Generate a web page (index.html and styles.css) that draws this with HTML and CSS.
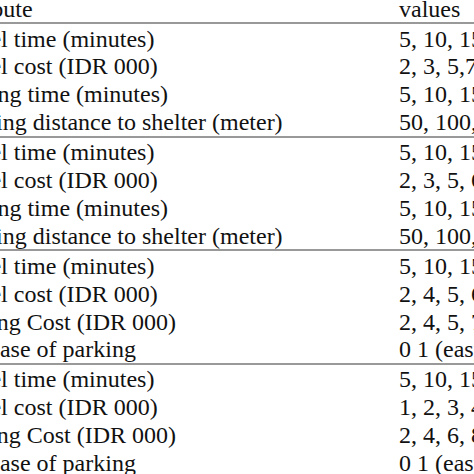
FILE: index.html
```html
<!DOCTYPE html>
<html>
<head>
<meta charset="utf-8">
<link rel="stylesheet" href="styles.css">
</head>
<body>
<div class="frame">
  <table class="tbl">
    <colgroup><col class="c-attr"><col class="c-val"></colgroup>
    <thead>
      <tr class="head"><th>Attribute</th><th>values</th></tr>
    </thead>
    <tbody class="grp">
      <tr><td>Travel time (minutes)</td><td>5, 10, 15, 20</td></tr>
      <tr><td>Travel cost (IDR 000)</td><td>2, 3, 5,7, 10</td></tr>
      <tr><td>Waiting time (minutes)</td><td>5, 10, 15, 20</td></tr>
      <tr><td>Walking distance to shelter (meter)</td><td>50, 100, 200</td></tr>
    </tbody>
    <tbody class="grp">
      <tr><td>Travel time (minutes)</td><td>5, 10, 15, 20</td></tr>
      <tr><td>Travel cost (IDR 000)</td><td>2, 3, 5, 6, 8</td></tr>
      <tr><td>Waiting time (minutes)</td><td>5, 10, 15, 20</td></tr>
      <tr><td>Walking distance to shelter (meter)</td><td>50, 100, 200</td></tr>
    </tbody>
    <tbody class="grp">
      <tr><td>Travel time (minutes)</td><td>5, 10, 15, 20</td></tr>
      <tr><td>Travel cost (IDR 000)</td><td>2, 4, 5, 6, 8</td></tr>
      <tr><td>Parking Cost (IDR 000)</td><td>2, 4, 5, 7, 9</td></tr>
      <tr><td>The ease of parking</td><td>0 1 (easy)</td></tr>
    </tbody>
    <tbody class="grp">
      <tr><td>Travel time (minutes)</td><td>5, 10, 15, 20</td></tr>
      <tr><td>Travel cost (IDR 000)</td><td>1, 2, 3, 4, 5</td></tr>
      <tr><td>Parking Cost (IDR 000)</td><td>2, 4, 6, 8, 10</td></tr>
      <tr><td>The ease of parking</td><td>0 1 (easy)</td></tr>
    </tbody>
  </table>
</div>
</body>
</html>
```
FILE: styles.css
```css
html, body {
  margin: 0;
  padding: 0;
  background: #fff;
}
.frame {
  width: 474px;
  height: 474px;
  overflow: hidden;
}
.tbl {
  border-collapse: collapse;
  table-layout: fixed;
  width: 633px;
  margin-left: -54px;
  margin-top: -3px;
  font-family: "Liberation Serif", "Times New Roman", serif;
  font-size: 24px;
  color: #111;
  white-space: nowrap;
}
.c-attr {
  width: 453px;
}
.c-val {
  width: 180px;
}
.tbl th, .tbl td {
  padding: 2.6px 0 1.3px 0;
  font-weight: normal;
  text-align: left;
  line-height: 24px;
  vertical-align: top;
}
.head th {
  border-bottom: 2px solid #999;
  padding-top: 0;
  padding-bottom: 1px;
}
.grp tr:last-child td {
  border-bottom: 2px solid #999;
}
```
